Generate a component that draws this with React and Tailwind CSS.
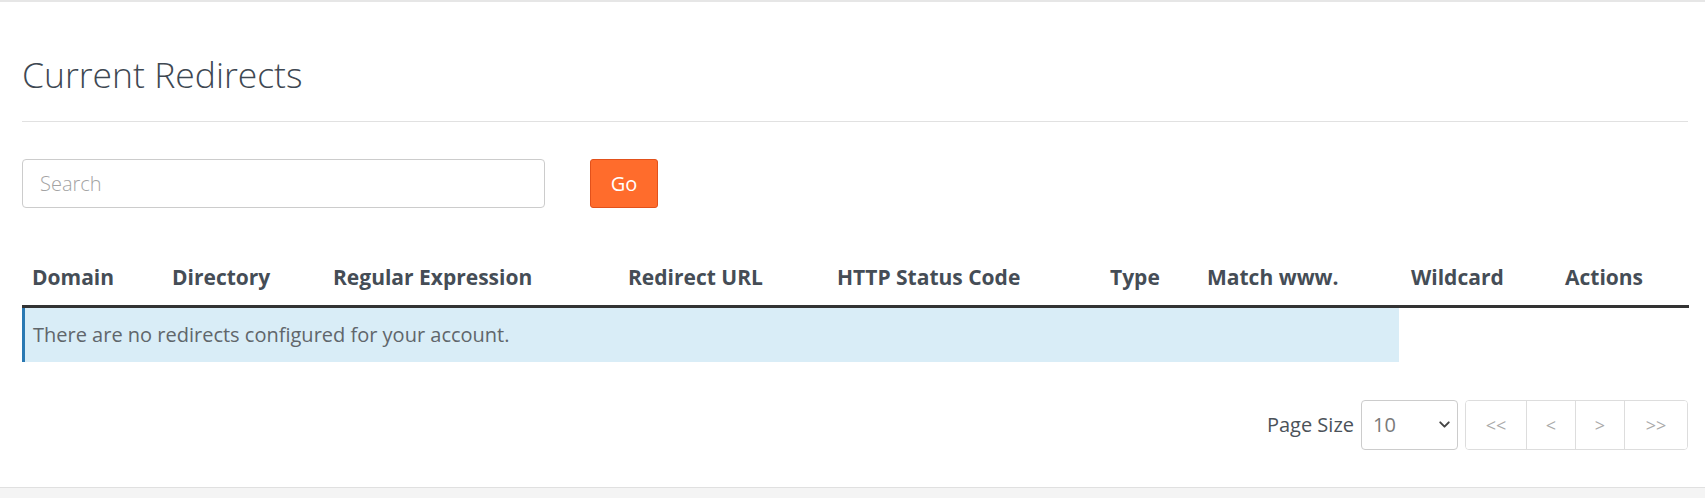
import { ChevronDown } from "lucide-react";

const columns = [
  { label: "Domain", width: "w-[140px]" },
  { label: "Directory", width: "w-[161px]" },
  { label: "Regular Expression", width: "w-[295px]" },
  { label: "Redirect URL", width: "w-[209px]" },
  { label: "HTTP Status Code", width: "w-[273px]" },
  { label: "Type", width: "w-[97px]" },
  { label: "Match www.", width: "w-[204px]" },
  { label: "Wildcard", width: "w-[154px]" },
  { label: "Actions", width: "w-[134px]" },
];

const pager = [
  { label: "<<", width: "w-[60px]" },
  { label: "<", width: "w-[49px]" },
  { label: ">", width: "w-[49px]" },
  { label: ">>", width: "w-[63px]" },
];

export default function App() {
  return (
    <div
      className="min-h-[498px] flex flex-col bg-white border-t-2 border-[#e6e6e6]"
      style={{ fontFamily: '"Open Sans", "Liberation Sans", sans-serif' }}
    >
      <main className="flex-1 pl-[22px] pr-[17px]">
        <h2 className="pt-[52px] pb-[27px] border-b border-[#e1e1e1] text-[35.5px] leading-[40px] font-light text-[#3e4852]">
          Current Redirects
        </h2>

        <div className="flex items-center mt-[37px]">
          <input
            type="text"
            placeholder="Search"
            className="w-[523px] h-[49px] px-[17px] rounded-[4px] border border-[#cccccc] text-[20px] font-light text-[#333] placeholder:text-[#a3a3a3] outline-none"
          />
          <button className="ml-[45px] w-[68px] h-[49px] rounded-[3px] border border-[#e2511b] bg-[#ff6c2c] text-white text-[20px]">
            Go
          </button>
        </div>

        <table className="mt-[42px] w-full table-fixed border-collapse">
          <thead>
            <tr className="border-b-[3px] border-[#333333]">
              {columns.map((c) => (
                <th
                  key={c.label}
                  className={`${c.width} pl-[10px] pt-[13px] pb-[14px] text-left text-[21px] leading-[28px] font-bold text-[#454d56] whitespace-nowrap`}
                >
                  {c.label}
                </th>
              ))}
            </tr>
          </thead>
          <tbody>
            <tr>
              <td colSpan={7} className="p-0">
                <div className="mr-[2px] bg-[#d9edf7] border-l-[3px] border-[#2a79b3] pl-[8px] py-[13px] text-[20px] leading-[28px] text-[#60666b] whitespace-nowrap">
                  There are no redirects configured for your account.
                </div>
              </td>
              <td colSpan={2}></td>
            </tr>
          </tbody>
        </table>

        <div className="flex items-center justify-end mt-[38px]">
          <span className="text-[20px] text-[#4b5259] mr-[7px]">Page Size</span>
          <div className="relative w-[97px] h-[50px]">
            <select
              defaultValue="10"
              className="appearance-none w-full h-full pl-[11px] rounded-[4px] border border-[#cccccc] bg-white text-[20px] text-[#7a7a7a] outline-none"
            >
              <option value="10">10</option>
              <option value="25">25</option>
              <option value="50">50</option>
            </select>
            <ChevronDown
              className="absolute right-[5px] top-[16px] w-[17px] h-[17px] text-[#444] pointer-events-none"
              strokeWidth={2.75}
            />
          </div>
          <div className="ml-[7px] flex h-[50px] rounded-[4px] border border-[#dddddd] overflow-hidden">
            {pager.map((p, i) => (
              <button
                key={p.label}
                className={`${p.width} h-full text-[18px] text-[#aaaaaa] bg-white ${i > 0 ? "border-l border-[#dddddd]" : ""}`}
              >
                {p.label}
              </button>
            ))}
          </div>
        </div>
      </main>

      <footer className="mt-[37px] h-[11px] border-t border-[#e0e0e0] bg-[#f4f4f4]" />
    </div>
  );
}
